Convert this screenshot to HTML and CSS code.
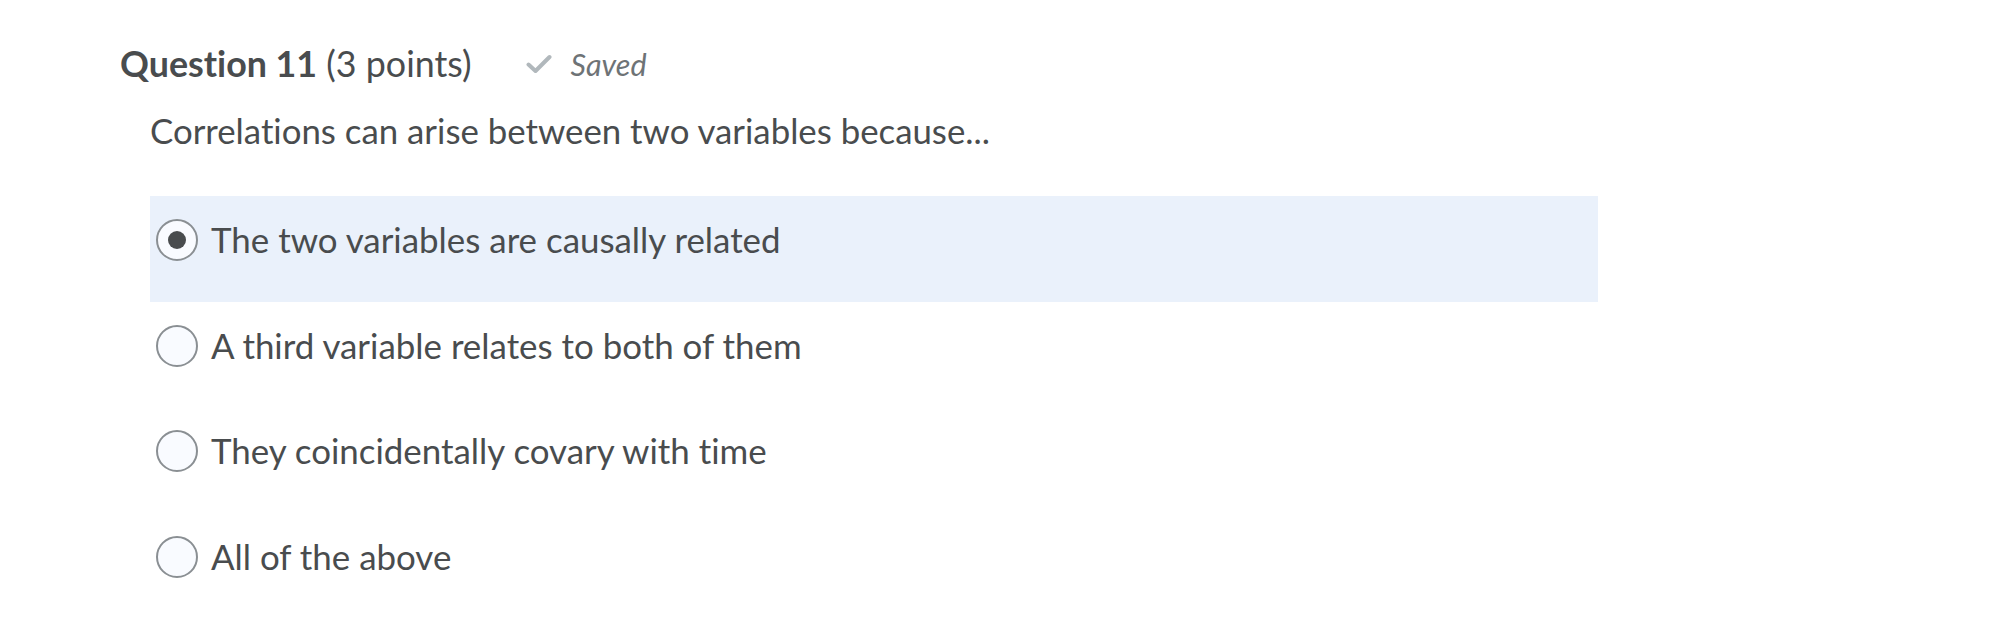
FILE: index.html
```html
<!DOCTYPE html>
<html lang="en">
<head>
<meta charset="utf-8">
<title>Question 11</title>
<link rel="stylesheet" href="styles.css">
</head>
<body>
<div class="page">
  <div class="q-header">
    <h2 class="q-title"><strong>Question 11</strong> (3 points)</h2>
    <span class="saved">
      <svg class="check" viewBox="0 0 26 20" width="26" height="20" aria-hidden="true"><path d="M2.5 10.5 L9.5 17 L23.5 3" fill="none" stroke="#b1b8bc" stroke-width="4" stroke-linecap="round" stroke-linejoin="round"/></svg>
      <em>Saved</em>
    </span>
  </div>
  <p class="q-text">Correlations can arise between two variables because...</p>
  <div class="options">
    <label class="option selected"><span class="radio checked"></span><span class="opt-text">The two variables are causally related</span></label>
    <label class="option"><span class="radio"></span><span class="opt-text">A third variable relates to both of them</span></label>
    <label class="option"><span class="radio"></span><span class="opt-text">They coincidentally covary with time</span></label>
    <label class="option"><span class="radio"></span><span class="opt-text">All of the above</span></label>
  </div>
</div>
</body>
</html>
```
FILE: styles.css
```css
html, body {
  margin: 0;
  padding: 0;
  background: #ffffff;
}
body {
  font-family: Lato, "Liberation Sans", sans-serif;
  color: #494c4e;
  font-variant-ligatures: none;
}
.page {
  padding: 46px 0 0 120px;
}
.q-header {
  display: flex;
  align-items: center;
  height: 36px;
}
.q-title {
  margin: 0;
  font-size: 35.8px;
  line-height: 36px;
  font-weight: 400;
}
.q-title strong {
  font-weight: 700;
}
.saved {
  display: flex;
  align-items: center;
  margin-left: 54px;
  color: #6e7376;
  font-size: 30.5px;
}
.saved .check {
  margin-right: 19px;
}
.saved em {
  font-style: italic;
}
.q-text {
  margin: 31px 0 0 30px;
  font-size: 34.8px;
  line-height: 36px;
}
.options {
  margin: 47px 0 0 30px;
  width: 1448px;
}
.option {
  display: flex;
  align-items: center;
  height: 105.5px;
  box-sizing: border-box;
  padding: 0 0 17px 6px;
  font-size: 34.9px;
  line-height: 36px;
}
.option.selected {
  background: #eaf1fb;
}
.radio {
  width: 42px;
  height: 42px;
  box-sizing: border-box;
  border: 2px solid #8a8f93;
  border-radius: 50%;
  background: #f9fbff;
  margin-right: 13px;
  display: flex;
  align-items: center;
  justify-content: center;
  flex: none;
}
.radio.checked::after {
  content: "";
  width: 18px;
  height: 18px;
  border-radius: 50%;
  background: #494c4e;
}
```
